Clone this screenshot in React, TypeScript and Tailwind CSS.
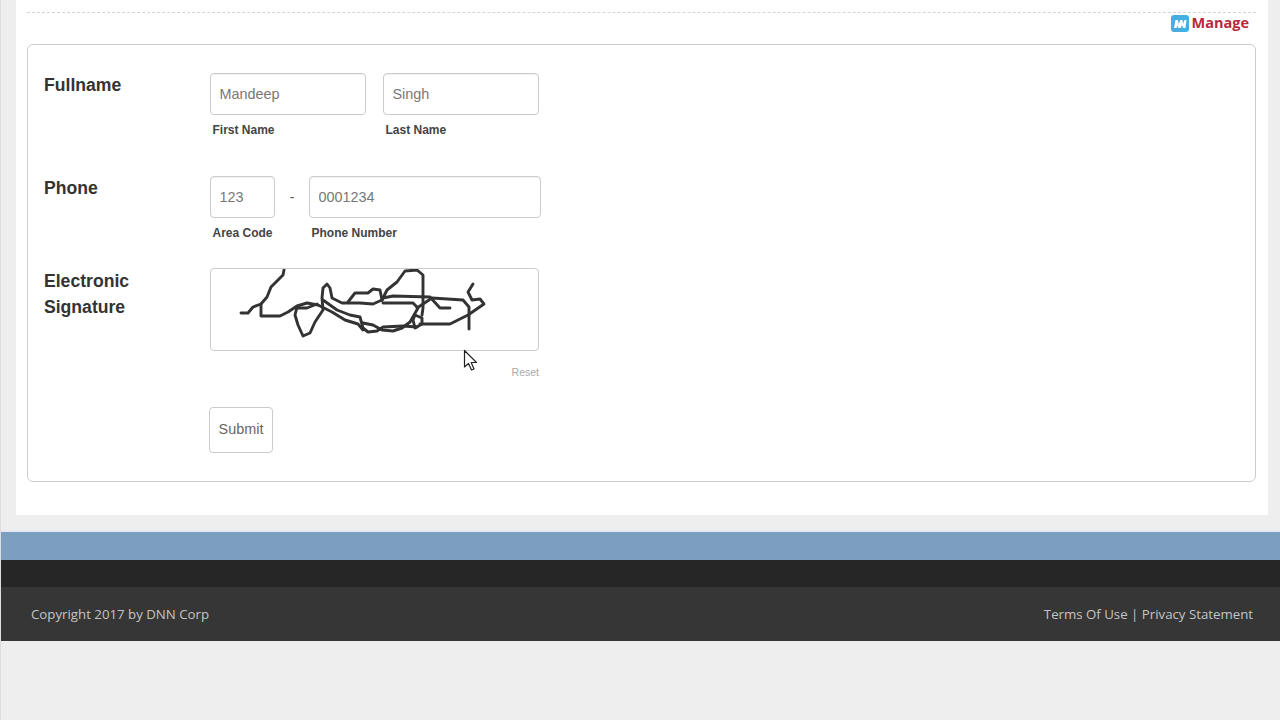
const fieldClass =
  "block h-[42px] w-full rounded-[4px] border border-[#ccc] bg-white px-[8.5px] text-[14.4px] text-[#777] placeholder:text-[#777] shadow-[inset_0_1px_1px_rgba(0,0,0,0.06)] outline-none";

function SubLabel({ text }: { text: string }) {
  return <div className="mt-[7px] ml-[2.5px] text-[12px] leading-[16px] font-bold text-[#444]">{text}</div>;
}

function RowLabel({ children }: { children: React.ReactNode }) {
  return <div className="w-[166px] shrink-0 text-[17.6px] leading-[26px] font-bold text-[#333]">{children}</div>;
}

function Signature() {
  return (
    <svg viewBox="211 269 327 81" className="block h-full w-full" fill="none" stroke="#333" strokeWidth="2.9" strokeLinejoin="round" strokeLinecap="round">
      <path d="M241 313 L248 313 L253 307 L261 304 L267 297 L271 287 L278 280 L283 275 L284 270" />
      <path d="M261 304 L261 316 L280 316 L288 312 L297 306 L307 303 L318 305 L332 312 L345 320 L358 324 L363 330" />
      <path d="M297 307 L295 315 L298 325 L303 336 L310 333 L315 322 L323 310 L322 298 L323 288 L327 284 L330 288 L332 298 L342 303 L360 303 L373 304 L382 300" />
      <path d="M297 308 L307 308 L317 304" />
      <path d="M323 300 L337 310 L350 315 L360 317 L363 328 L368 332 L377 331 L383 327 L403 326 L417 327" />
      <path d="M348 302 L355 293 L368 293 L373 289 L380 290 L382 300" />
      <path d="M382 300 L387 290 L397 282 L405 271 L417 270 L423 275 L423 308 L422 315" />
      <path d="M383 298 L393 296 L430 297 L440 308 L450 308" />
      <path d="M383 303 L413 303 L418 308 L410 322 L402 328 L393 331 L382 330 L373 325 L363 323" />
      <path d="M417 308 L432 298 L463 300 L469 307 L469 329" />
      <path d="M415 315 L422 318 L422 324 L415 328 L413 320 Z" />
      <path d="M420 324 L450 324 L468 315 L484 304 L480 299 L472 300 L468 292 L473 284" />
    </svg>
  );
}

export default function App() {
  return (
    <div className="relative min-h-[720px] overflow-hidden border-l border-[#ddd] bg-[#eeeeee] font-['Liberation_Sans',Arial,sans-serif]">
      <div className="-ml-px border-l border-[#444]">
        {/* page content */}
        <div className="mr-[12px] ml-[15px] h-[515px] bg-white pt-[12px] pr-[12px] pl-[11px]">
          <div className="border-t border-dashed border-[#d4d4d4]" />
          <div className="mb-[11px] flex h-[20px] items-center justify-end gap-[3px] pr-[7px]">
            <svg viewBox="0 0 18 17" className="h-[17px] w-[18px]">
              <rect width="18" height="17" rx="3" fill="#45b0de" />
              <path d="M3 13 L4.5 5 L7 5 L7.5 9 L9.5 5 L11.5 5 L12 9 L13.5 5 L15.5 5 L14.5 13 L12 13 L11 10 L9.5 13 L7 13 L6.7 10 L5.5 13 Z" fill="#fff" />
            </svg>
            <span className="font-['Open_Sans',sans-serif] text-[14.5px] leading-[20px] font-bold text-[#b8293d]">Manage</span>
          </div>

          {/* form card */}
          <div className="h-[438px] rounded-[6px] border border-[#ccc] px-[16px] pt-[28px]">
            <div className="flex h-[103px]">
              <div className="-mt-px">
                <RowLabel>Fullname</RowLabel>
              </div>
              <div className="flex gap-[17px]">
                <div className="w-[156px]">
                  <input className={fieldClass} placeholder="Mandeep" />
                  <SubLabel text="First Name" />
                </div>
                <div className="w-[156px]">
                  <input className={fieldClass} placeholder="Singh" />
                  <SubLabel text="Last Name" />
                </div>
              </div>
            </div>

            <div className="flex h-[92px]">
              <div className="-mt-px">
                <RowLabel>Phone</RowLabel>
              </div>
              <div className="flex">
                <div className="w-[65px]">
                  <input className={fieldClass} placeholder="123" />
                  <SubLabel text="Area Code" />
                </div>
                <div className="flex h-[42px] w-[34px] items-center justify-center text-[14px] text-[#555]">-</div>
                <div className="w-[232px]">
                  <input className={fieldClass} placeholder="0001234" />
                  <SubLabel text="Phone Number" />
                </div>
              </div>
            </div>

            <div className="flex h-[139px]">
              <RowLabel>
                Electronic
                <br />
                Signature
              </RowLabel>
              <div className="w-[329px]">
                <div className="h-[83px] rounded-[4px] border border-[#ccc] bg-white">
                  <Signature />
                </div>
                <div className="mt-[14px] text-right text-[10.5px] leading-[14px] text-[#aaa]">Reset</div>
              </div>
            </div>

            <div className="ml-[165px]">
              <button className="h-[46px] w-[64px] rounded-[4px] border border-[#ccc] bg-white text-[14.4px] text-[#666]">Submit</button>
            </div>
          </div>
        </div>

        {/* footer bands */}
        <div className="mt-[15px] h-[30px] border-t-2 border-[#e4e9f3] bg-[#7c9ebf]" />
        <div className="h-[27px] bg-[#262626]" />
        <div className="flex h-[54px] items-center justify-between bg-[#363636] pt-[1px] pr-[27px] pl-[30px] font-['Open_Sans',sans-serif] text-[13.25px] text-[#c4c4c4]">
          <span>Copyright 2017 by DNN Corp</span>
          <span>Terms Of Use | Privacy Statement</span>
        </div>
      </div>

      {/* mouse cursor */}
      <svg viewBox="0 0 16 24" className="absolute top-[349px] left-[462px] h-[24px] w-[16px]">
        <path d="M1.5 1.5 L1.5 18 L5.5 14.5 L8.5 21 L11 20 L8.2 13.5 L13.5 13.5 Z" fill="#fff" stroke="#222" strokeWidth="1.2" strokeLinejoin="round" />
      </svg>
    </div>
  );
}
